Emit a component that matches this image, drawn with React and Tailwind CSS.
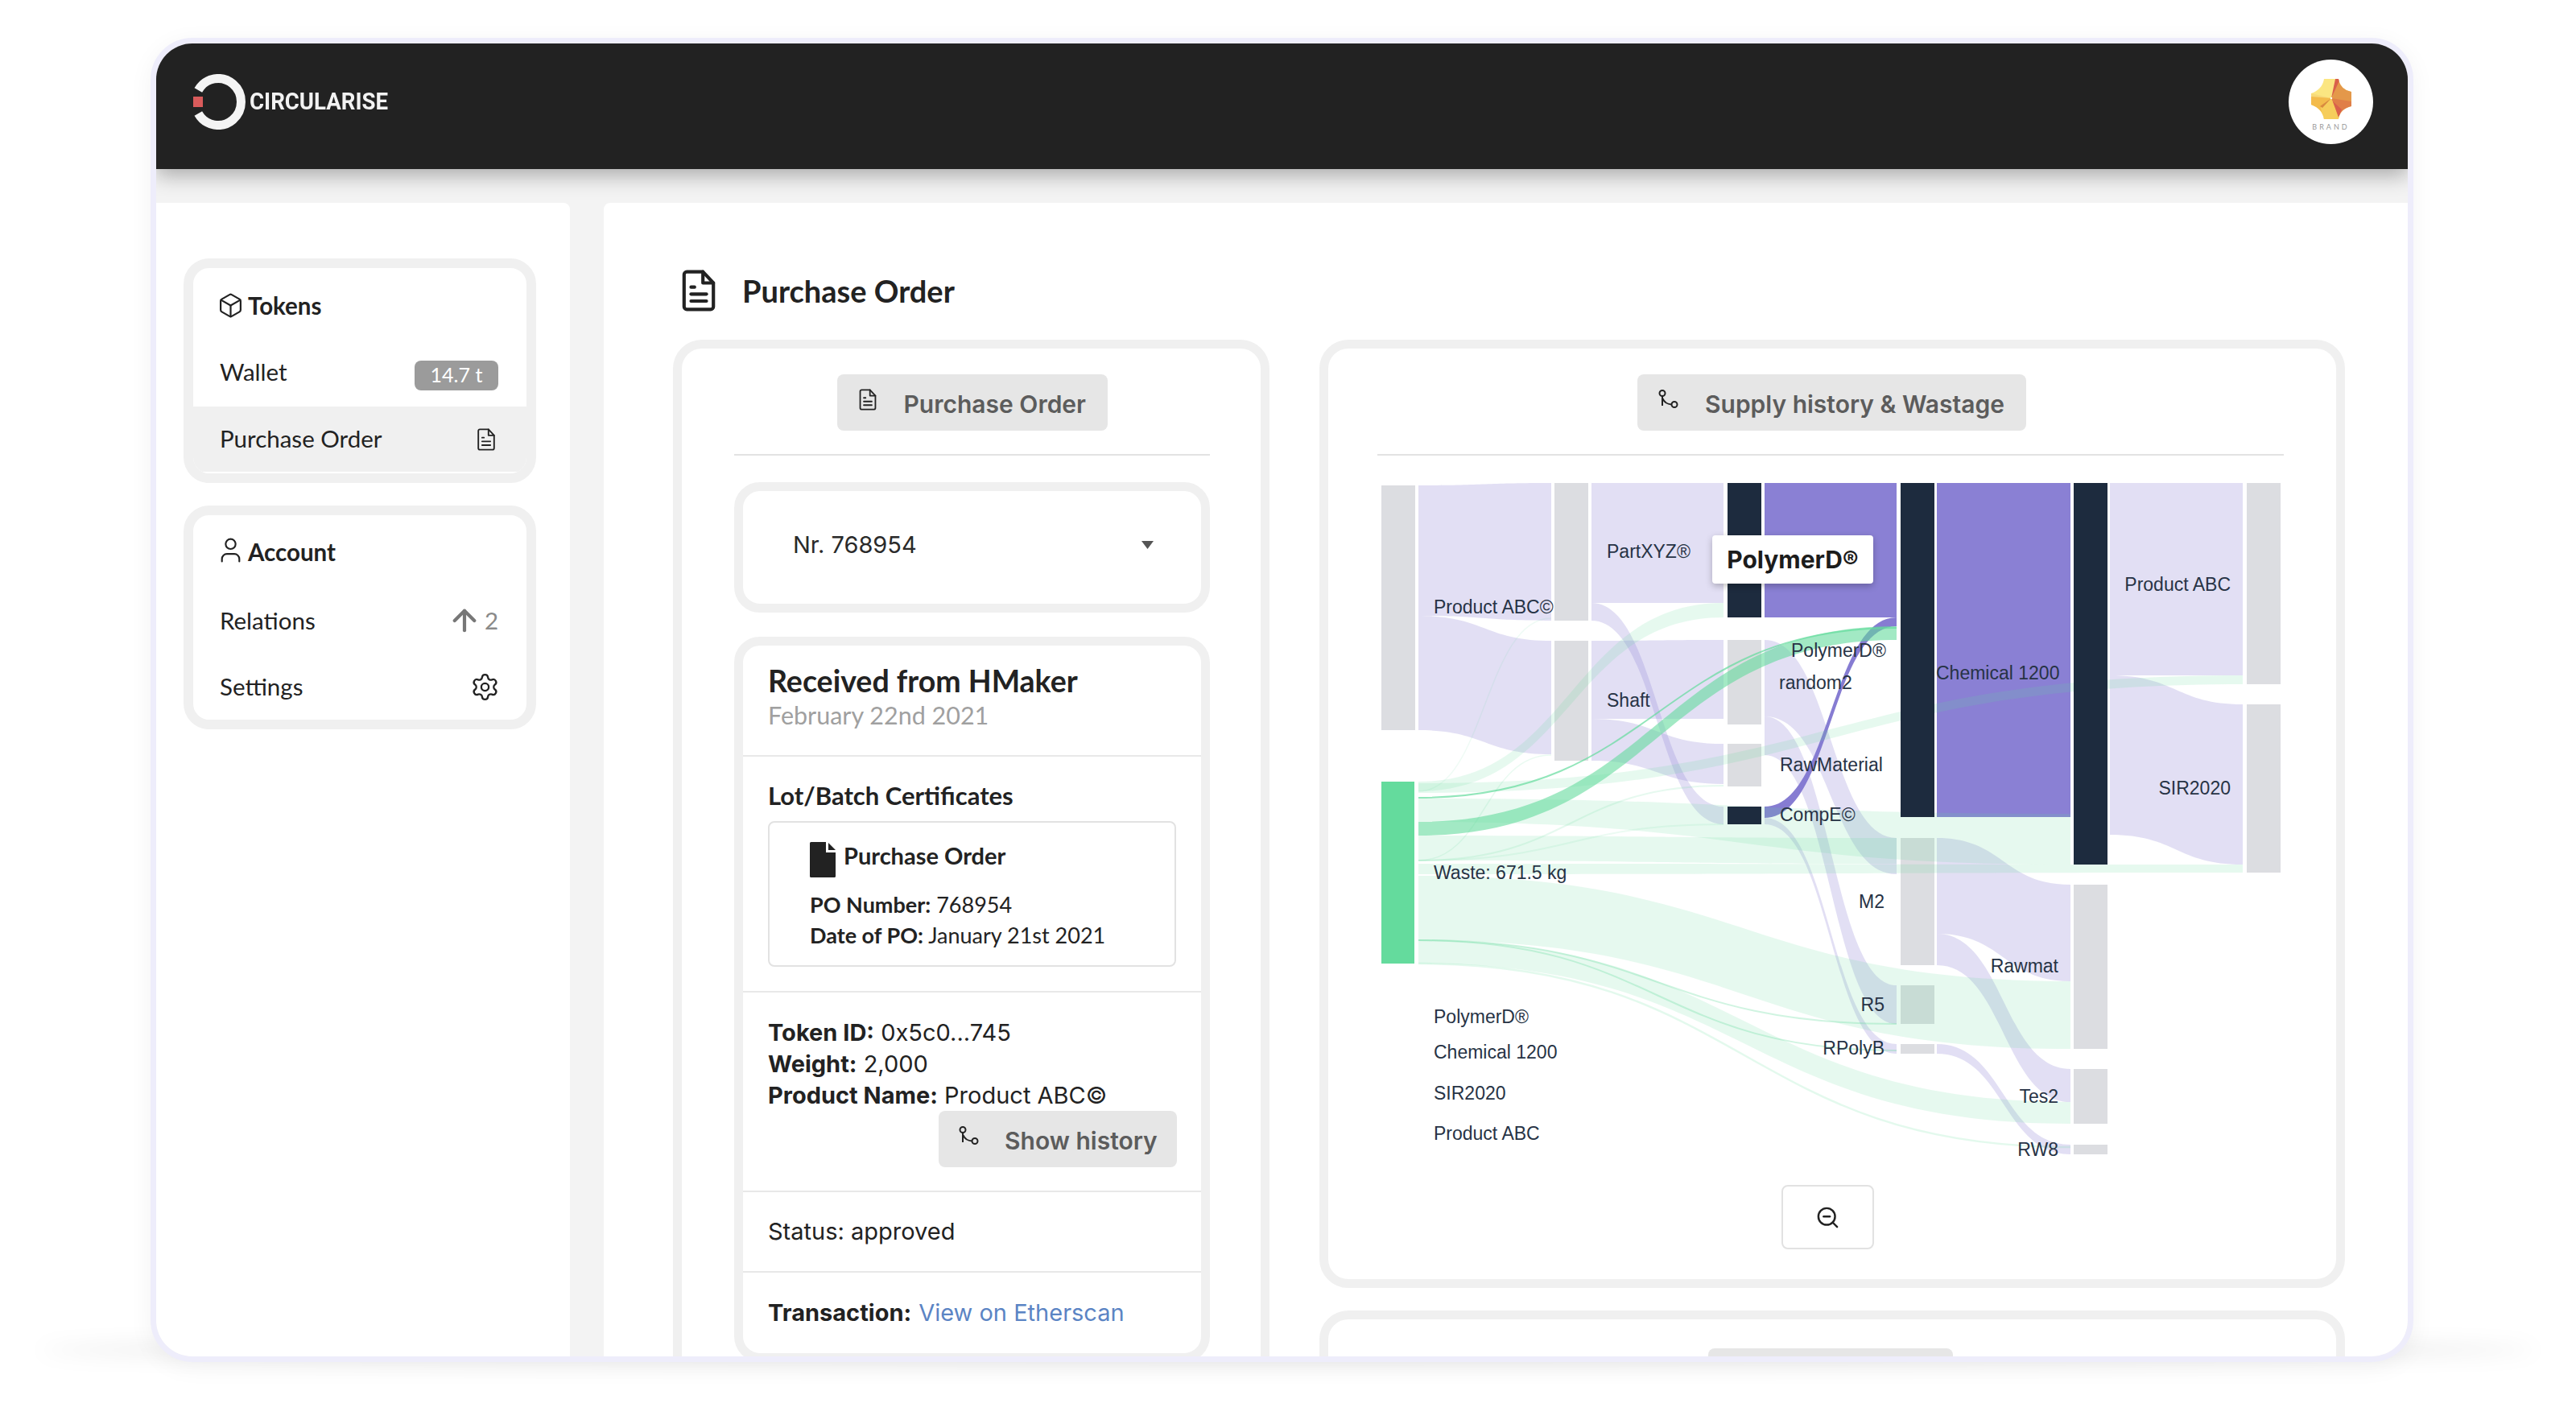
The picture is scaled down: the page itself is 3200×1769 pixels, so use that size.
import { ArrowUp, Box, Settings, User, ZoomOut } from 'lucide-react'

// link shape with different thickness at each end
const band = (x0, t0, b0, x1, t1, b1) => {
  const m = (x0 + x1) / 2
  return `M${x0} ${t0}C${m} ${t0} ${m} ${t1} ${x1} ${t1}L${x1} ${b1}C${m} ${b1} ${m} ${b0} ${x0} ${b0}Z`
}

const thin = (x0, y0, x1, y1) => {
  const m = (x0 + x1) / 2
  return `M${x0} ${y0}C${m} ${y0} ${m} ${y1} ${x1} ${y1}`
}

const GRAY_NODES = [
  [1716, 603, 907], [1931, 600, 771], [1931, 796, 945], [2146, 795, 900], [2146, 924, 977],
  [2361, 1041, 1199], [2361, 1224, 1272], [2361, 1297, 1309],
  [2576, 1099, 1303], [2576, 1328, 1396], [2576, 1422, 1434],
  [2791, 600, 850], [2791, 875, 1084],
]

const NAVY_NODES = [
  [2146, 600, 767], [2146, 1002, 1024], [2361, 600, 1015], [2576, 600, 1074],
]

const PURPLE_LINKS = [
  [1762, 603, 765, 1927, 600, 771],
  [1762, 765, 907, 1927, 796, 937],
  [1977, 600, 749, 2141, 600, 749],
  [1977, 749, 771, 2141, 1002, 1024],
  [1977, 796, 893, 2141, 795, 893],
  [1977, 893, 945, 2141, 924, 974],
  [2192, 795, 890, 2356, 1041, 1086],
  [2192, 890, 938, 2356, 1224, 1272],
  [2192, 1016, 1024, 2356, 1297, 1309],
  [2406, 1041, 1160, 2572, 1099, 1219],
  [2406, 1160, 1199, 2572, 1328, 1369],
  [2406, 1297, 1309, 2572, 1422, 1434],
  [2621, 600, 839, 2786, 600, 839],
  [2621, 839, 1037, 2786, 875, 1074],
]

const GREEN_LINKS = [
  [1762, 971, 983, 2141, 749, 767],
  [1762, 973, 985, 2786, 839, 850],
  [1762, 992, 1021, 2572, 1011, 1074],
  [1762, 1038, 1069, 2356, 1041, 1073],
  [1762, 1073, 1086, 2786, 1074, 1084],
  [1762, 1088, 1168, 2572, 1219, 1303],
  [1762, 1168, 1197, 2572, 1369, 1396],
]

const GREEN_LINES = [
  [1762, 983, 1927, 768, 1.5, 0.1],
  [1762, 1069, 1927, 938, 1.5, 0.14],
  [1762, 1069, 2141, 976, 2, 0.16],
  [1762, 1069, 2141, 1024, 2, 0.12],
  [1762, 1168, 2356, 1272, 2, 0.3],
  [1762, 1168, 2356, 1305, 2, 0.3],
  [1762, 1197, 2572, 1425, 2.5, 0.18],
]

const LABELS = [
  ['Product ABC©', 1781, 754], ['PartXYZ®', 1996, 685], ['Shaft', 1996, 870],
  ['PolymerD®', 2225, 808], ['random2', 2210, 848], ['RawMaterial', 2211, 950],
  ['CompE©', 2211, 1012], ['Chemical 1200', 2405, 836], ['Waste: 671.5 kg', 1781, 1084],
  ['PolymerD®', 1781, 1263], ['Chemical 1200', 1781, 1307], ['SIR2020', 1781, 1358],
  ['Product ABC', 1781, 1408],
  ['Product ABC', 2771, 726, 'end'], ['SIR2020', 2771, 979, 'end'], ['M2', 2341, 1120, 'end'],
  ['R5', 2341, 1248, 'end'], ['RPolyB', 2341, 1302, 'end'], ['Rawmat', 2557, 1200, 'end'],
  ['Tes2', 2557, 1362, 'end'], ['RW8', 2557, 1428, 'end'],
]

function Sankey() {
  return (
    <svg viewBox="1700 596 1160 841" className="block h-[841px] w-[1160px]">
      {GRAY_NODES.map(([x, t, b]) => (
        <rect key={`${x}-${t}`} x={x} y={t} width="42" height={b - t} fill="#dcdde1" />
      ))}
      <rect x="1716" y="971" width="41" height="226" fill="#64db9d" />
      {PURPLE_LINKS.map((l, i) => (
        <path key={i} d={band(...l)} fill="#8a80d4" fillOpacity="0.25" />
      ))}
      {/* solid flows for the selected material */}
      <rect x="2192" y="600" width="164" height="167" fill="#8a80d4" />
      <rect x="2406" y="600" width="166" height="415" fill="#8a80d4" />
      <path d={band(2192, 1002, 1016, 2356, 767, 778)} fill="#7f75d0" fillOpacity="0.95" />
      {GREEN_LINKS.map((l, i) => (
        <path key={i} d={band(...l)} fill="#64db9d" fillOpacity="0.16" />
      ))}
      <path d={band(1762, 1021, 1038, 2356, 778, 795)} fill="#64db9d" fillOpacity="0.6" />
      <path d={thin(1762, 991, 2356, 780)} fill="none" stroke="#64db9d" strokeOpacity="0.7" strokeWidth="2" />
      {GREEN_LINES.map(([x0, y0, x1, y1, w, o], i) => (
        <path key={i} d={thin(x0, y0, x1, y1)} fill="none" stroke="#64db9d" strokeOpacity={o} strokeWidth={w} />
      ))}
      {NAVY_NODES.map(([x, t, b]) => (
        <rect key={`${x}-${t}`} x={x} y={t} width="42" height={b - t} fill="#1d2b3e" />
      ))}
      {LABELS.map(([text, x, y, anchor]) => (
        <text
          key={`${text}-${y}`}
          x={x}
          y={y}
          textAnchor={anchor || 'start'}
          dominantBaseline="central"
          fill="#273345"
          fontSize="23"
          fontFamily="'Liberation Sans', Arial, sans-serif"
        >
          {text}
        </text>
      ))}
    </svg>
  )
}

function DocIcon({ className, strokeWidth = 2 }) {
  return (
    <svg viewBox="0 0 24 30" fill="none" stroke="currentColor" strokeWidth={strokeWidth} strokeLinejoin="round" strokeLinecap="round" className={className}>
      <path d="M3.5 1.5H15L22.5 9.5V26.5A2 2 0 0 1 20.5 28.5H3.5A2 2 0 0 1 1.5 26.5V3.5A2 2 0 0 1 3.5 1.5Z" />
      <path d="M15 1.5V9.5H22.5" />
      <path d="M6.5 12.5H9" />
      <path d="M6.5 17.5H17.5" />
      <path d="M6.5 22.5H17.5" />
    </svg>
  )
}

function RouteIcon({ className }) {
  return (
    <svg viewBox="0 0 25 25" fill="none" stroke="currentColor" strokeWidth="2" className={className}>
      <circle cx="5" cy="4.5" r="3.5" />
      <circle cx="20" cy="18.5" r="3.5" />
      <path d="M5 8V20M5.5 11C7 15 11 18 16.5 18.5" />
    </svg>
  )
}

function BrandMark() {
  return (
    <svg viewBox="0 0 50 50" className="h-[50px] w-[50px]">
      <defs>
        <clipPath id="brand-shape">
          <path d="M16 0H34Q36 13 50 16V34Q36 37 34 50H16Q14 37 0 32V18Q14 13 16 0Z" />
        </clipPath>
      </defs>
      <g clipPath="url(#brand-shape)">
        <rect width="50" height="50" fill="#fbe682" />
        <path d="M0 18L25 24L0 32Z" fill="#f7d97a" />
        <path d="M0 22L25 24L12 34L16 50H0Z" fill="#f3bb4c" />
        <path d="M25 24L36 50H14L12 34Z" fill="#f6cd5b" />
        <path d="M25 24L34 0L50 16V34Z" fill="#e4984a" />
        <path d="M25 24L50 28V40L34 46Z" fill="#e07f48" />
        <path d="M25 24L36 0L30 0Z" fill="#d9604b" />
        <path d="M27 28L34 48L38 38Z" fill="#d9604b" />
        <path d="M11 34L25 24L14 36Z" fill="#d98a3f" />
      </g>
      <circle cx="25" cy="24" r="1.2" fill="#fff" />
    </svg>
  )
}

function Logo() {
  return (
    <div className="flex items-center">
      <svg viewBox="0 0 65 69" className="h-[69px] w-[65px]">
        <path d="M6.3 20A28.5 29 0 1 1 6.3 49" fill="none" stroke="#f4f4f4" strokeWidth="11" />
        <rect x="0" y="28" width="12" height="13" fill="#d95b5b" />
      </svg>
      <span className="ml-[5px] origin-left text-[30px] font-bold leading-none text-[#f2f2f2] font-['Roboto',sans-serif] [transform:scaleX(0.92)]">CIRCULARISE</span>
    </div>
  )
}

function Divider() {
  return <div className="h-[2px] bg-[#e8e8e8]" />
}

function ActionButton({ icon, label, className }) {
  return (
    <div className={`flex h-[70px] items-center rounded-lg bg-[#e6e6e6] text-[30px] font-semibold text-[#5c5c5c] font-['Inter',sans-serif] ${className}`}>
      {icon}
      <span className="translate-y-[2px]">{label}</span>
    </div>
  )
}

function Sidebar() {
  return (
    <aside className="flex w-[514px] shrink-0 flex-col gap-[28px] rounded-tr-lg bg-white pl-[34px] pr-[42px] pt-[69px]">
      <div className="h-[279px] overflow-hidden rounded-[32px] border-[12px] border-[#f0f0f0] text-[29.5px] text-[#222]">
        <div className="flex h-[90px] items-center pl-[33px] pt-[4px]">
          <Box size={33} strokeWidth={1.6} className="-ml-[3px] mr-[5px] -translate-y-px" />
          <span className="font-bold">Tokens</span>
        </div>
        <div className="flex h-[82px] items-center justify-between pb-[4px] pl-[33px] pr-[35px]">
          <span>Wallet</span>
          <span className="flex h-[37px] w-[104px] translate-y-[4px] items-center justify-center rounded-lg bg-[#9b9b9b] text-[25px] text-white">14.7 t</span>
        </div>
        <div className="flex h-[81px] items-center justify-between bg-[#f0f0f0] pl-[33px] pr-[38px]">
          <span>Purchase Order</span>
          <DocIcon className="h-[28px] w-[24px]" />
        </div>
      </div>
      <div className="h-[278px] overflow-hidden rounded-[32px] border-[12px] border-[#f0f0f0] text-[29.5px] text-[#222]">
        <div className="flex h-[88px] items-center pl-[33px] pt-[4px]">
          <User size={37} strokeWidth={1.4} className="-ml-[5px] mr-[3px] -translate-y-[3px]" />
          <span className="font-bold">Account</span>
        </div>
        <div className="flex h-[82px] translate-y-[2px] items-center justify-between pl-[33px] pr-[35px]">
          <span>Relations</span>
          <span className="flex items-center gap-[4px] text-[#8a8a8a]">
            <ArrowUp size={42} strokeWidth={2.4} className="-my-[8px] text-[#777]" />2
          </span>
        </div>
        <div className="flex h-[82px] translate-y-[2px] items-center justify-between pl-[33px] pr-[35px]">
          <span>Settings</span>
          <Settings size={37} strokeWidth={1.5} className="-my-[4px] -mr-[2px]" />
        </div>
      </div>
    </aside>
  )
}

function OrderCard() {
  return (
    <div className="rounded-[32px] border-[11px] border-[#f0f0f0] text-[#222]">
      <div className="h-[136px] pl-[31px] pt-[22px]">
        <div className="text-[37.5px] font-bold leading-[44px]">Received from HMaker</div>
        <div className="text-[30.5px] leading-[40px] text-[#a0a0a0]">February 22nd 2021</div>
      </div>
      <Divider />
      <div className="px-[31px] pb-[30px] pt-[30px]">
        <div className="text-[31px] font-bold leading-[36px]">Lot/Batch Certificates</div>
        <div className="mt-[14px] h-[181px] rounded-lg border-2 border-[#e2e2e2] pl-[50px] pt-[24px]">
          <div className="flex">
            <svg viewBox="0 0 32 44" className="h-[44px] w-[32px] fill-[#222]">
              <path d="M1.5 0H20V13H32V42.5A1.5 1.5 0 0 1 30.5 44H1.5A1.5 1.5 0 0 1 0 42.5V1.5A1.5 1.5 0 0 1 1.5 0Z" />
              <path d="M23 1V10H32Z" />
            </svg>
            <span className="ml-[10px] text-[29px] font-bold leading-[34px]">Purchase Order</span>
          </div>
          <div className="mt-[15px] text-[27px] leading-[38px]">
            <div><b className="font-bold">PO Number:</b> 768954</div>
            <div><b className="font-bold">Date of PO:</b> January 21st 2021</div>
          </div>
        </div>
      </div>
      <Divider />
      <div className="flex flex-col pl-[31px] pr-[30px] pt-[30px] font-['Inter',sans-serif] text-[29px] leading-[39px]">
        <div><b className="font-bold">Token ID:</b> 0x5c0...745</div>
        <div><b className="font-bold">Weight:</b> 2,000</div>
        <div><b className="font-bold">Product Name:</b> Product ABC©</div>
        <ActionButton
          icon={<RouteIcon className="ml-[25px] mr-[32px] h-[25px] w-[25px] -translate-y-[4px] text-[#222]" />}
          label="Show history"
          className="mb-[29px] w-[296px] self-end"
        />
      </div>
      <Divider />
      <div className="flex h-[98px] items-center pl-[31px] font-['Inter',sans-serif] text-[29px]">Status: approved</div>
      <Divider />
      <div className="flex h-[100px] items-center pl-[31px] font-['Inter',sans-serif] text-[29px]">
        <b className="mr-[9px] font-bold">Transaction:</b>
        <span className="text-[#5b84c4]">View on Etherscan</span>
      </div>
    </div>
  )
}

function OrderPanel() {
  return (
    <section className="w-[741px] shrink-0 rounded-[36px] border-[11px] border-[#f0f0f0] pb-[40px] pl-[65px] pr-[63px] pt-[32px]">
      <ActionButton
        icon={<DocIcon className="ml-[26px] mr-[33px] h-[27px] w-[24px] -translate-y-[4px] text-[#222]" strokeWidth={2} />}
        label="Purchase Order"
        className="mx-auto w-[336px]"
      />
      <div className="mt-[29px] h-[2px] bg-[#e2e2e2]" />
      <div className="mt-[33px] flex h-[162px] items-center justify-between rounded-[32px] border-[11px] border-[#f0f0f0] pb-[7px] pl-[62px] pr-[59px] font-['Inter',sans-serif] text-[29px] text-[#2a2a2a]">
        <span>Nr. 768954</span>
        <svg viewBox="0 0 15 10" className="h-[10px] w-[15px] fill-[#555]">
          <path d="M0 0H15L7.5 10Z" />
        </svg>
      </div>
      <div className="mt-[30px]">
        <OrderCard />
      </div>
    </section>
  )
}

function SupplyPanel() {
  return (
    <div className="flex w-[1274px] shrink-0 flex-col gap-[28px]">
      <section className="flex h-[1178px] flex-col rounded-[36px] border-[11px] border-[#f0f0f0] pt-[32px]">
        <ActionButton
          icon={<RouteIcon className="ml-[26px] mr-[33px] h-[25px] w-[25px] -translate-y-[4px] text-[#222]" />}
          label="Supply history & Wastage"
          className="ml-[384px] w-[483px]"
        />
        <div className="ml-[61px] mr-[65px] mt-[29px] h-[2px] bg-[#e2e2e2]" />
        <div className="relative ml-[50px] mt-[30px]">
          <Sankey />
          {/* tooltip over the hovered node */}
          <div className="absolute left-[427px] top-[69px] flex h-[60px] w-[200px] items-center justify-center rounded-[4px] bg-white font-['Inter',sans-serif] text-[30px] font-bold text-[#1c1c1c] shadow-[0_3px_8px_rgba(0,0,0,0.25)]">
            PolymerD®
          </div>
        </div>
        <div className="ml-[563px] mt-[35px] flex h-[80px] w-[115px] items-center justify-center rounded-lg border-2 border-[#e2e2e2] text-[#222]">
          <ZoomOut size={31} strokeWidth={1.9} />
        </div>
      </section>
      <section className="h-[300px] rounded-[36px] border-[11px] border-[#f0f0f0] pt-[36px]">
        <div className="ml-[472px] h-[70px] w-[304px] rounded-lg bg-[#e6e6e6]" />
      </section>
    </div>
  )
}

export default function App() {
  return (
    <div className="relative h-[1769px] w-[3200px] overflow-hidden bg-white font-['Lato',sans-serif]">
      {/* soft floor shadow under the window */}
      <div className="absolute left-[50px] right-[50px] top-[1660px] h-[34px] rounded-[50%] bg-[#000]/[0.07] blur-[12px]" />
      <div className="relative ml-[187px] mt-[47px] flex h-[1645px] w-[2811px] flex-col overflow-hidden rounded-[52px] border-[7px] border-[#eeedfb] bg-[#f3f3f3] shadow-[0_6px_30px_rgba(0,0,0,0.05)]">
        <header className="relative z-10 flex h-[156px] shrink-0 items-center justify-between bg-[#222] pl-[46px] pr-[43px] shadow-[0_8px_24px_rgba(0,0,0,0.3)]">
          <div className="-translate-y-[6px]"><Logo /></div>
          <div className="flex h-[105px] w-[105px] -translate-y-[6px] flex-col items-center rounded-full bg-white pt-[24px]">
            <BrandMark />
            <span className="mt-[5px] text-[9px] leading-[10px] tracking-[3px] text-[#999]">BRAND</span>
          </div>
        </header>
        <div className="flex min-h-0 flex-1 gap-[42px] pt-[42px]">
          <Sidebar />
          <main className="min-w-0 flex-1 overflow-hidden rounded-tl-lg bg-white pl-[86px]">
            <div className="flex h-[170px] items-start pt-[83px]">
              <DocIcon className="ml-[11px] h-[52px] w-[42px] text-[#222]" strokeWidth={2.4} />
              <h1 className="ml-[33px] -translate-y-px text-[38px] font-bold leading-[54px] text-[#222]">Purchase Order</h1>
            </div>
            <div className="flex gap-[62px]">
              <OrderPanel />
              <SupplyPanel />
            </div>
          </main>
        </div>
      </div>
    </div>
  )
}
